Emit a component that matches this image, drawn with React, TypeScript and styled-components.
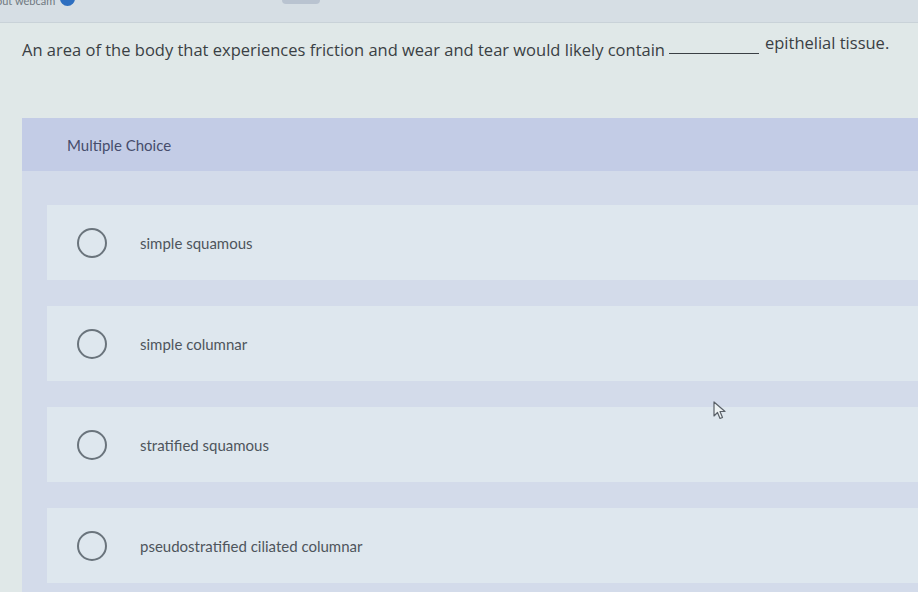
import React from "react";
import styled, { createGlobalStyle } from "styled-components";

const Global = createGlobalStyle`
  html, body { margin: 0; padding: 0; background: #e0e8e8; }
  body { font-family: Lato, "Open Sans", sans-serif; overflow: hidden; }
  #root { width: 918px; height: 592px; }
`;

const Page = styled.div`
  position: relative;
  width: 918px;
  height: 592px;
  display: flex;
  flex-direction: column;
  background: #e0e8e8;
  overflow: hidden;
`;

const TopBar = styled.div`
  height: 22px;
  flex: none;
  display: flex;
  align-items: flex-start;
  gap: 5px;
  background: #d6dee4;
  border-bottom: 1px solid #c9d2d8;
  overflow: hidden;
`;

const TopText = styled.span`
  font-size: 11px;
  line-height: 11px;
  color: #6f7880;
  margin: -5px 0 0 -4px;
  white-space: nowrap;
`;

const InfoDot = styled.span`
  width: 15px;
  height: 15px;
  border-radius: 50%;
  background: #2e6fc0;
  margin-top: -9px;
  flex: none;
`;

const GhostButton = styled.span`
  width: 38px;
  height: 20px;
  border-radius: 4px;
  background: #b9c3d0;
  margin: -16px 0 0 202px;
  flex: none;
`;

const Question = styled.p`
  margin: 0;
  padding: 15px 0 0 22px;
  height: 95px;
  box-sizing: border-box;
  font-family: "Open Sans", Lato, sans-serif;
  font-size: 16.5px;
  color: #3a3f44;
  flex: none;
  white-space: nowrap;
`;

const Blank = styled.span`
  display: inline-block;
  width: 90px;
  margin: 0 6px 0 4px;
  border-bottom: 1px solid #3a3f44;
  vertical-align: 2px;
`;

const Tail = styled.span`
  position: relative;
  top: -7px;
`;

const Panel = styled.section`
  margin-left: 22px;
  flex: 1;
  display: flex;
  flex-direction: column;
  background: #d3dbea;
`;

const PanelHeader = styled.div`
  height: 53px;
  display: flex;
  align-items: center;
  padding-left: 45px;
  background: #c3cce6;
  font-size: 15px;
  color: #464d6c;
`;

const Options = styled.div`
  display: flex;
  flex-direction: column;
  gap: 26px;
  padding: 34px 0 0 25px;
`;

const OptionCard = styled.label`
  height: 75px;
  display: flex;
  align-items: center;
  gap: 33px;
  padding-left: 30px;
  background: #dee7ee;
  cursor: pointer;
`;

const Radio = styled.span`
  width: 26px;
  height: 26px;
  border-radius: 50%;
  border: 2px solid #6a747c;
  flex: none;
`;

const OptionText = styled.span`
  font-size: 15px;
  color: #4e555c;
`;

const Cursor = styled.svg`
  position: absolute;
  left: 713px;
  top: 401px;
`;

const options = [
  "simple squamous",
  "simple columnar",
  "stratified squamous",
  "pseudostratified ciliated columnar",
];

export default function App() {
  return (
    <Page>
      <Global />
      <TopBar>
        <TopText>out webcam</TopText>
        <InfoDot />
        <GhostButton />
      </TopBar>
      <Question>
        An area of the body that experiences friction and wear and tear would
        likely contain<Blank />
        <Tail>epithelial tissue.</Tail>
      </Question>
      <Panel>
        <PanelHeader>Multiple Choice</PanelHeader>
        <Options>
          {options.map((o) => (
            <OptionCard key={o}>
              <Radio />
              <OptionText>{o}</OptionText>
            </OptionCard>
          ))}
        </Options>
      </Panel>
      <Cursor width="14" height="20" viewBox="0 0 14 20">
        <path
          d="M1 1 L1 15 L4.5 11.5 L7 17.5 L9.5 16.5 L7 10.5 L12 10.5 Z"
          fill="#eef3f4"
          stroke="#5a6168"
          strokeWidth="1.2"
          strokeLinejoin="round"
        />
      </Cursor>
    </Page>
  );
}
